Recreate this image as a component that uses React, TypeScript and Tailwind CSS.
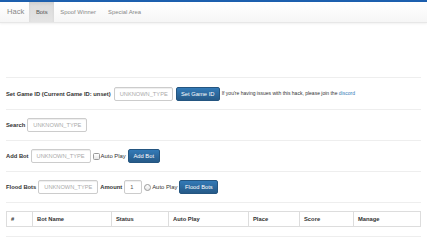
import React from 'react';

const font = { fontFamily: '"Liberation Sans", Arial, sans-serif' };

function TextInput({ w, value, placeholder }: { w: string; value?: string; placeholder?: string }) {
  return (
    <div
      className={`${w} h-[14px] shrink-0 rounded-[2px] border border-[#ccc] bg-white px-[5px] flex items-center text-[5.7px] shadow-[inset_0_1px_1px_rgba(0,0,0,0.07)]`}
    >
      {value ? <span className="text-[#555]">{value}</span> : <span className="text-[#aaa]">{placeholder}</span>}
    </div>
  );
}

function Btn({ w, children }: { w: string; children: React.ReactNode }) {
  return (
    <div
      className={`${w} h-[14px] shrink-0 rounded-[2px] border border-[#245580] bg-gradient-to-b from-[#337ab7] to-[#265a88] text-white text-[5.8px] flex items-center justify-center whitespace-nowrap`}
    >
      {children}
    </div>
  );
}

function Check({ round }: { round?: boolean }) {
  return (
    <div
      className={`w-[7px] h-[7px] shrink-0 border border-[#999] bg-gradient-to-b from-white to-[#e6e6e6] ${round ? 'rounded-full' : 'rounded-[1.5px]'}`}
    />
  );
}

function Label({ children }: { children: React.ReactNode }) {
  return <span className="text-[5.8px] font-bold text-[#333] whitespace-nowrap">{children}</span>;
}

function Section({ pt, pb, children }: { pt: string; pb: string; children: React.ReactNode }) {
  return (
    <div className={`border-t border-[#eee] ${pt} ${pb}`}>
      <div className="flex items-center h-[14px]">{children}</div>
    </div>
  );
}

const columns = [
  { name: '#', w: 'w-[25px]' },
  { name: 'Bot Name', w: 'w-[79px]' },
  { name: 'Status', w: 'w-[57px]' },
  { name: 'Auto Play', w: 'w-[80px]' },
  { name: 'Place', w: 'w-[51px]' },
  { name: 'Score', w: 'w-[54px]' },
  { name: 'Manage', w: 'flex-1' },
];

export default function App() {
  return (
    <div className="w-[427px] h-[240px] overflow-hidden bg-white" style={font}>
      {/* top bar */}
      <div className="h-[2px] bg-[#1c5fae]" />

      {/* navbar */}
      <div className="h-[21px] flex items-stretch bg-gradient-to-b from-white to-[#f6f6f6] border-b border-[#e7e7e7] shadow-[0_1px_2px_rgba(0,0,0,0.06)]">
        <div className="pl-[7px] pr-[5px] flex items-center text-[7.6px] text-[#888]">Hack</div>
        <div className="w-[25px] flex items-center justify-center text-[5.9px] text-[#555] bg-gradient-to-b from-[#dbdbdb] to-[#e4e4e4] shadow-[inset_0_2px_3px_rgba(0,0,0,0.06)]">
          Bots
        </div>
        <div className="pl-[6px] pr-[12px] flex items-center text-[5.9px] text-[#888]">Spoof Winner</div>
        <div className="flex items-center text-[5.9px] text-[#888]">Special Area</div>
      </div>

      {/* content */}
      <div className="px-[6px] pt-[54px]">
        <Section pt="pt-[9px]" pb="pb-[8px]">
          <Label>Set Game ID (Current Game ID: unset)</Label>
          <div className="w-[3px]" />
          <TextInput w="w-[59px]" placeholder="UNKNOWN_TYPE" />
          <div className="w-[3px]" />
          <Btn w="w-[44px]">Set Game ID</Btn>
          <span className="ml-[2px] text-[5px] text-[#333] whitespace-nowrap">
            If you&apos;re having issues with this hack, please join the{' '}
            <span className="text-[#337ab7]">discord</span>
          </span>
        </Section>

        <Section pt="pt-[8px]" pb="pb-[8px]">
          <Label>Search</Label>
          <div className="w-[2px]" />
          <TextInput w="w-[60px]" placeholder="UNKNOWN_TYPE" />
        </Section>

        <Section pt="pt-[8px]" pb="pb-[8px]">
          <Label>Add Bot</Label>
          <div className="w-[2px]" />
          <TextInput w="w-[60px]" placeholder="UNKNOWN_TYPE" />
          <div className="w-[2px]" />
          <Check />
          <span className="ml-[1px] text-[5.9px] text-[#333] whitespace-nowrap">Auto Play</span>
          <div className="w-[2px]" />
          <Btn w="w-[32px]">Add Bot</Btn>
        </Section>

        <Section pt="pt-[8px]" pb="pb-[8px]">
          <Label>Flood Bots</Label>
          <div className="w-[2px]" />
          <TextInput w="w-[60px]" placeholder="UNKNOWN_TYPE" />
          <div className="w-[2px]" />
          <Label>Amount</Label>
          <div className="w-[2px]" />
          <TextInput w="w-[18px]" value="1" />
          <div className="w-[2px]" />
          <Check round />
          <span className="ml-[1px] text-[5.9px] text-[#333] whitespace-nowrap">Auto Play</span>
          <div className="w-[2px]" />
          <Btn w="w-[39px]">Flood Bots</Btn>
        </Section>

        {/* table */}
        <div className="border-t border-[#eee] pt-[8px] pb-[9px]">
          <div className="flex h-[16px] border border-[#ddd]">
            {columns.map((c, i) => (
              <div
                key={c.name}
                className={`${c.w} flex items-center pl-[4px] text-[5.8px] font-bold text-[#333] ${i > 0 ? 'border-l border-[#ddd]' : ''}`}
              >
                {c.name}
              </div>
            ))}
          </div>
        </div>
        <div className="border-t border-[#eee]" />
      </div>
    </div>
  );
}
